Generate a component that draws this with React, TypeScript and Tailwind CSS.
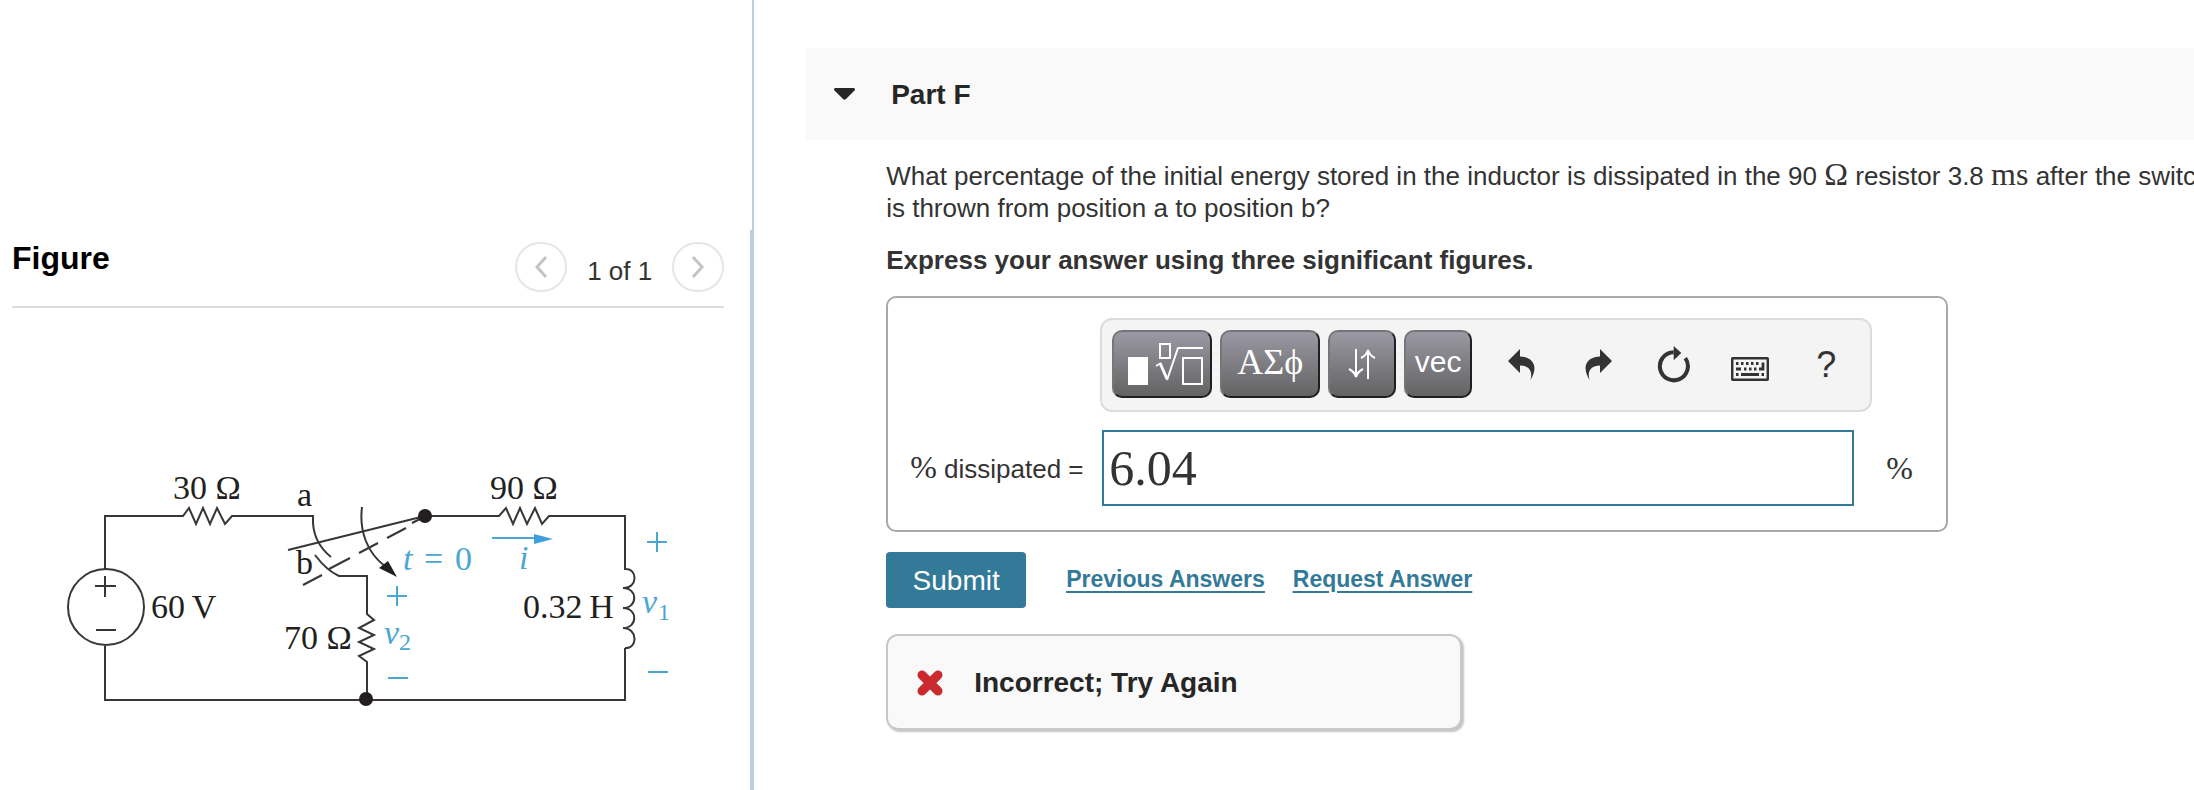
import React, { useState } from 'react';

const toolButton =
  'flex h-[68px] shrink-0 items-center justify-center rounded-[10px] border-2 border-t-[#767676] border-l-[#767676] border-r-[#1f1f1f] border-b-[#1f1f1f] bg-linear-to-b from-[#9b99a4] to-[#636363] text-white';
const iconButton = 'flex h-[68px] w-[76px] items-center justify-center pt-[2px] text-[#333]';

function Circuit() {
  return (
    <svg viewBox="0 0 640 270" className="w-[640px] max-w-full" role="img" aria-label="Circuit diagram">
      <g fill="none" stroke="#3a3638" strokeWidth="2">
        {/* source and left branch */}
        <path d="M55 118V65H133L139 57L146 73L153 57L160 73L167 57L175 73L182 65H263V72C264 88 271 98 281 106" />
        <circle cx="56" cy="156" r="38" />
        <path d="M45 135H66M55 125V146M46 179H66" />
        <path d="M55 195V249H575V197" />
        {/* switch */}
        <path d="M238 99L375 65" />
        <path d="M253 134L272 124M279 118L300 107M309 102L328 92M337 87L356 77M362 72L370 68" />
        <path d="M265 104C271 112 280 121 289 125H317V163L324 169L309 177L324 184L309 191L324 198L309 205L317 211V249" />
        <path d="M312 56C309 80 317 102 336 116" />
        {/* right branch with inductor */}
        <path d="M375 65H449L456 57L463 73L470 57L477 73L485 57L492 73L499 65H575V118C588 117 588 138 573 137C588 137 588 157 573 157C588 157 588 177 573 177C588 177 588 198 575 197" />
      </g>
      <g fill="#231f20">
        <circle cx="375" cy="65" r="7" />
        <circle cx="316" cy="248" r="7" />
        <path d="M347 126L329 117L338 110Z" />
      </g>
      <g fill="none" stroke="#4ba6d3" strokeWidth="2">
        <path d="M442 87H486" />
        <path d="M337 145H357M347 135V155M338 227H358" />
        <path d="M597 91H617M607 81V101M598 221H618" />
      </g>
      <path d="M503 88L484 83V93Z" fill="#3f9fdc" />
      <g fill="#231f20" className="font-['Liberation_Serif',serif] text-[34px]">
        <text x="123" y="48">30 Ω</text>
        <text x="247" y="55">a</text>
        <text x="246" y="123">b</text>
        <text x="101" y="167">60&#8201;V</text>
        <text x="234" y="198">70 Ω</text>
        <text x="440" y="48">90 Ω</text>
        <text x="473" y="167">0.32&#8201;H</text>
      </g>
      <g fill="#4ba6d3" className="font-['Liberation_Serif',serif] text-[34px]">
        <text x="353" y="119" fontStyle="italic">t</text>
        <text x="374" y="119">=</text>
        <text x="405" y="119">0</text>
        <text x="469" y="118" fontStyle="italic">i</text>
        <text x="334" y="193" fontStyle="italic">v</text>
        <text x="349" y="199" className="text-[24px]">2</text>
        <text x="592" y="162" fontStyle="italic">v</text>
        <text x="608" y="169" className="text-[24px]">1</text>
      </g>
    </svg>
  );
}

function FigurePane() {
  return (
    <aside className="flex min-h-screen flex-col">
      <div className="h-[230px] border-r-2 border-[#bccbdd]" />
      <section className="flex-1 border-r-4 border-[#bccbdd] pt-3 pr-[26px] pl-3">
        <div className="flex items-start justify-between border-b-2 border-[#dedede] pb-[14px]">
          <h2 className="text-[32px] leading-8 font-bold text-black">Figure</h2>
          <div className="flex items-center gap-5 text-[26px] text-[#333]">
            <button aria-label="Previous figure" className="flex h-[50px] w-[52px] items-center justify-center rounded-full border-2 border-[#e6e6e6]">
              <svg width="14" height="22" viewBox="0 0 14 22" fill="none" stroke="#c4c4c4" strokeWidth="3"><path d="M12 1L3 11L12 21" /></svg>
            </button>
            <span className="pt-2 leading-8">1 of 1</span>
            <button aria-label="Next figure" className="flex h-[50px] w-[52px] items-center justify-center rounded-full border-2 border-[#e6e6e6]">
              <svg width="14" height="22" viewBox="0 0 14 22" fill="none" stroke="#c4c4c4" strokeWidth="3"><path d="M2 1L11 11L2 21" /></svg>
            </button>
          </div>
        </div>
        <div className="mt-[143px] ml-[38px]">
          <Circuit />
        </div>
      </section>
    </aside>
  );
}

function Toolbar() {
  return (
    <div className="ml-[212px] flex w-[772px] items-start gap-2 rounded-[12px] border-2 border-[#dcdcdc] bg-[#f4f4f4] px-[10px] pt-[10px] pb-3">
      <button className={`${toolButton} w-[100px] pl-[6px]`} aria-label="Templates">
        <svg width="76" height="44" viewBox="0 0 76 44" fill="none" stroke="#fff">
          <rect x="1" y="15" width="20" height="28" fill="#fff" stroke="none" />
          <rect x="33" y="2" width="10" height="14" strokeWidth="2" />
          <path d="M29 24L34 21" strokeWidth="1.5" />
          <path d="M33 21L40 37" strokeWidth="3" />
          <path d="M40 38L51 6H76" strokeWidth="2" />
          <rect x="56" y="16" width="19" height="26" strokeWidth="2" />
        </svg>
      </button>
      <button className={`${toolButton} w-[100px] pb-1 font-['Liberation_Serif','DejaVu_Serif',serif] text-[36px] leading-10`}>ΑΣϕ</button>
      <button className={`${toolButton} w-[68px]`} aria-label="Arrows">
        <svg width="28" height="32" viewBox="0 0 28 32" fill="none" stroke="#fff" strokeWidth="2">
          <path d="M8 1V28M1 21C5 23 7 25 8 29C9 25 11 23 15 21M20 31V4M13 10C17 8 19 6 20 2C21 6 23 8 27 10" />
        </svg>
      </button>
      <button className={`${toolButton} w-[68px] pb-1 text-[30px] leading-8`}>vec</button>
      <div className="ml-1 flex">
        <button className={iconButton} aria-label="Undo">
          <svg width="28" height="32" viewBox="0 0 28 32" fill="currentColor">
            <path d="M0 12L12 0V7.5C25 8 31 17 22.5 31C25 22 21 16.5 12 16.5V24Z" />
          </svg>
        </button>
        <button className={iconButton} aria-label="Redo">
          <svg width="28" height="32" viewBox="0 0 28 32" fill="currentColor">
            <path d="M28 12L16 0V7.5C3 8 -3 17 5.5 31C3 22 7 16.5 16 16.5V24Z" />
          </svg>
        </button>
        <button className={iconButton} aria-label="Reset">
          <svg width="34" height="38" viewBox="0 0 34 38" fill="none" stroke="currentColor" strokeWidth="4">
            <path d="M28.3 12.2A14 14 0 1 1 16.7 6.3" />
            <path d="M16.7 0L24.3 7L16.7 14.3Z" fill="currentColor" stroke="none" />
          </svg>
        </button>
        <button className="flex h-[68px] w-[76px] items-center justify-center pt-[10px] text-[#333]" aria-label="Keyboard shortcuts">
          <svg width="38" height="24" viewBox="0 0 38 24" fill="none" stroke="currentColor" strokeWidth="2.5">
            <rect x="1.2" y="1.2" width="35.6" height="21.6" rx="1" />
            <path d="M5 6.5H7.5M10 6.5H12.5M15 6.5H17.5M20 6.5H22.5M25 6.5H27.5M5 12H10M13 12H15.5M18 12H20.5M23 12H25.5M28 12H32V5.5M5 17.5H7.5M10 17.5H28M30.5 17.5H33" strokeWidth="2.8" />
          </svg>
        </button>
        <button className={`${iconButton} text-[36px] leading-9`} aria-label="Help">?</button>
      </div>
    </div>
  );
}

export default function App() {
  const [answer, setAnswer] = useState('6.04');

  return (
    <div className="grid min-h-screen grid-cols-[11fr_21fr] overflow-hidden bg-white font-['Liberation_Sans',Arial,sans-serif] text-[#333]">
      <FigurePane />

      <main className="min-w-0 overflow-hidden pt-12 pl-[52px]">
        <header className="flex h-[92px] items-center bg-[#f9f9f9] pl-7">
          <button aria-label="Collapse Part F" className="mr-[35px]">
            <svg width="22" height="12" viewBox="0 0 22 12" fill="#262626"><path d="M2 0H19C21 0 21.5 1.5 20.5 2.5L12 11Q10.5 12.5 9 11L.5 2.5C-.5 1.5 0 0 2 0Z" /></svg>
          </button>
          <h1 className="pt-[2px] text-[28px] leading-8 font-bold text-[#262626]">Part F</h1>
        </header>

        <div className="pt-[18px] pl-20 text-[26px] leading-8">
          <p className="whitespace-nowrap">
            What percentage of the initial energy stored in the inductor is dissipated in the 90{' '}
            <span className="font-['Liberation_Serif',serif] text-[32px] leading-none">Ω</span> resistor 3.8{' '}
            <span className="font-['Liberation_Serif',serif] text-[32px] leading-none">ms</span> after the switch
            <br />
            is thrown from position a to position b?
          </p>
          <p className="mt-5 font-bold">Express your answer using three significant figures.</p>

          <div className="mt-5 w-[1062px] rounded-[10px] border-2 border-[#a9a9a9] pt-5 pb-6">
            <Toolbar />
            <div className="mt-[18px] flex items-center pl-[22px]">
              <label htmlFor="answer" className="w-[192px] whitespace-nowrap">
                <span className="font-['Liberation_Serif',serif] text-[32px] leading-none">%</span> dissipated =
              </label>
              <input
                id="answer"
                value={answer}
                onChange={(e) => setAnswer(e.target.value)}
                className="h-[76px] w-[752px] border-2 border-[#337a99] px-[5px] font-['Liberation_Serif',serif] text-[50px] outline-none"
              />
              <span className="ml-8 font-['Liberation_Serif',serif] text-[32px]">%</span>
            </div>
          </div>

          <div className="mt-5 flex items-center">
            <button className="h-14 w-[140px] rounded bg-[#337a99] pt-[2px] text-[28px] text-white">Submit</button>
            <div className="ml-10 flex gap-7 pb-[2px] text-[23px] font-bold text-[#337a99] underline decoration-2 underline-offset-4">
              <a href="#">Previous Answers</a>
              <a href="#">Request Answer</a>
            </div>
          </div>

          <div className="mt-[26px] flex h-[96px] w-[576px] items-center rounded-[12px] border-2 border-[#c8c8c8] bg-[#f9f9f9] pt-[2px] pl-[28px] shadow-[2px_2px_2px_#c4c4c4]">
            <svg width="28" height="28" viewBox="0 0 28 28" stroke="#ca2a2d" strokeWidth="9" strokeLinecap="round">
              <path d="M6 6L22 22M22 6L6 22" />
            </svg>
            <strong className="ml-[30px] text-[28px] text-[#262626]">Incorrect; Try Again</strong>
          </div>
        </div>
      </main>
    </div>
  );
}
